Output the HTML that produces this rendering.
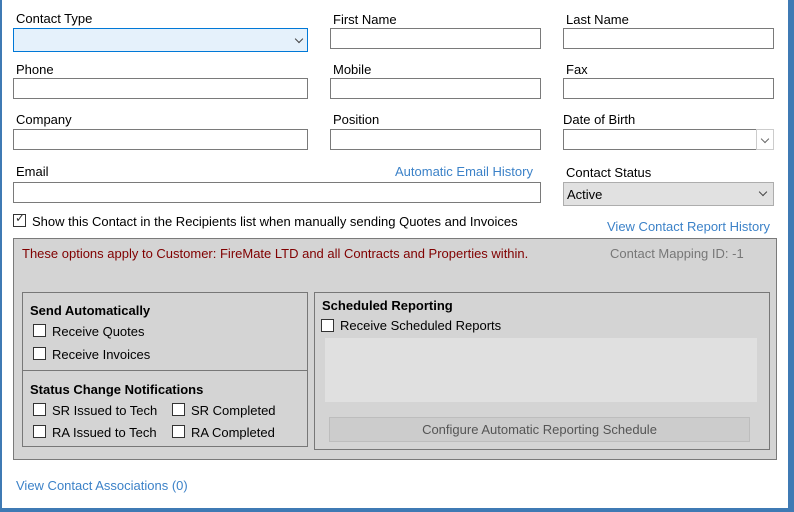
<!DOCTYPE html>
<html><head><style>
*{box-sizing:border-box;margin:0;padding:0}
body{width:794px;height:512px;background:#fff;position:relative;overflow:hidden;font-family:"Liberation Sans",sans-serif;font-size:13px;color:#000}
.a{position:absolute;white-space:nowrap}
.in{position:absolute;border:1px solid #7a7a7a;background:#fff;height:21px}
.lk{color:#3c82c8}
.cb{position:absolute;width:13px;height:13px;border:1px solid #333;background:#fff}
.chev{position:absolute;width:6px;height:6px;border-right:1px solid #444;border-bottom:1px solid #444;transform:rotate(45deg)}
b{font-weight:bold}
</style></head><body>
<div class="a" style="left:0;top:0;width:2px;height:512px;background:#3f7ab4"></div>
<div class="a" style="left:788px;top:0;width:6px;height:512px;background:#3f7ab4"></div>
<div class="a" style="left:0;top:508px;width:794px;height:4px;background:#3f7ab4"></div>

<div class="a" style="left:16px;top:11px">Contact Type</div>
<div class="in" style="left:13px;top:28px;width:295px;height:24px;border-color:#0078d7;background:#e5f1fb"></div>
<div class="chev" style="left:296px;top:36px"></div>
<div class="a" style="left:333px;top:12px">First Name</div>
<div class="in" style="left:330px;top:28px;width:211px"></div>
<div class="a" style="left:566px;top:12px">Last Name</div>
<div class="in" style="left:563px;top:28px;width:211px"></div>

<div class="a" style="left:16px;top:62px">Phone</div>
<div class="in" style="left:13px;top:78px;width:295px"></div>
<div class="a" style="left:333px;top:62px">Mobile</div>
<div class="in" style="left:330px;top:78px;width:211px"></div>
<div class="a" style="left:566px;top:62px">Fax</div>
<div class="in" style="left:563px;top:78px;width:211px"></div>

<div class="a" style="left:16px;top:112px">Company</div>
<div class="in" style="left:13px;top:129px;width:295px"></div>
<div class="a" style="left:333px;top:112px">Position</div>
<div class="in" style="left:330px;top:129px;width:211px"></div>
<div class="a" style="left:563px;top:112px">Date of Birth</div>
<div class="in" style="left:563px;top:129px;width:194px"></div>
<div class="in" style="left:756px;top:129px;width:18px;border-color:#ccc"></div>
<div class="chev" style="left:762px;top:136px;border-color:#666"></div>

<div class="a" style="left:16px;top:164px">Email</div>
<div class="a lk" style="left:395px;top:164px">Automatic Email History</div>
<div class="in" style="left:13px;top:182px;width:528px"></div>
<div class="a" style="left:566px;top:165px">Contact Status</div>
<div class="in" style="left:563px;top:182px;width:211px;height:24px;background:#e1e1e1;border-color:#adadad"></div>
<div class="a" style="left:567px;top:187px">Active</div>
<div class="chev" style="left:760px;top:189px"></div>

<div class="cb" style="left:13px;top:214px;border-color:#333"></div>
<div class="a" style="left:15px;top:211px;font-size:12px;color:#333">✓</div>
<div class="a" style="left:32px;top:214px">Show this Contact in the Recipients list when manually sending Quotes and Invoices</div>
<div class="a lk" style="left:607px;top:219px">View Contact Report History</div>

<div class="a" style="left:13px;top:238px;width:764px;height:222px;background:#d4d4d4;border:1px solid #7a7a7a"></div>
<div class="a" style="left:22px;top:246px;color:#800000">These options apply to Customer: FireMate LTD and all Contracts and Properties within.</div>
<div class="a" style="left:610px;top:246px;color:#777">Contact Mapping ID: -1</div>

<div class="a" style="left:22px;top:292px;width:286px;height:155px;border:1px solid #777"></div>
<div class="a" style="left:22px;top:370px;width:286px;height:1px;background:#777"></div>
<div class="a" style="left:30px;top:303px"><b>Send Automatically</b></div>
<div class="cb" style="left:33px;top:324px"></div><div class="a" style="left:52px;top:324px">Receive Quotes</div>
<div class="cb" style="left:33px;top:347px"></div><div class="a" style="left:52px;top:347px">Receive Invoices</div>
<div class="a" style="left:30px;top:382px"><b>Status Change Notifications</b></div>
<div class="cb" style="left:33px;top:403px"></div><div class="a" style="left:52px;top:403px">SR Issued to Tech</div>
<div class="cb" style="left:172px;top:403px"></div><div class="a" style="left:191px;top:403px">SR Completed</div>
<div class="cb" style="left:33px;top:425px"></div><div class="a" style="left:52px;top:425px">RA Issued to Tech</div>
<div class="cb" style="left:172px;top:425px"></div><div class="a" style="left:191px;top:425px">RA Completed</div>

<div class="a" style="left:314px;top:292px;width:456px;height:158px;border:1px solid #777"></div>
<div class="a" style="left:322px;top:298px"><b>Scheduled Reporting</b></div>
<div class="cb" style="left:321px;top:319px"></div><div class="a" style="left:340px;top:318px">Receive Scheduled Reports</div>
<div class="a" style="left:325px;top:338px;width:432px;height:64px;background:#e0e0e0"></div>
<div class="a" style="left:329px;top:417px;width:421px;height:25px;background:#cccccc;border:1px solid #bdbdbd;color:#555;text-align:center;line-height:23px">Configure Automatic Reporting Schedule</div>

<div class="a lk" style="left:16px;top:478px">View Contact Associations (0)</div>
</body></html>
